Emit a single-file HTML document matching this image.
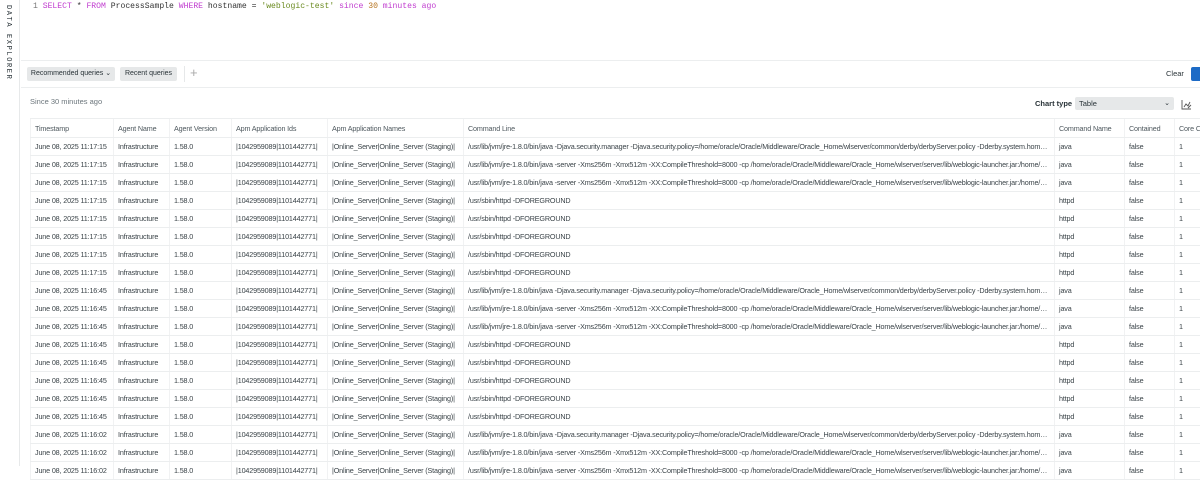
<!DOCTYPE html>
<html><head><meta charset="utf-8"><style>
*{margin:0;padding:0;box-sizing:border-box}
body{width:1200px;height:466px;overflow:hidden;background:#fff;font-family:"Liberation Sans",sans-serif;color:#293338;position:relative}
.side{position:absolute;left:0;top:0;width:20px;height:466px;border-right:1px solid #e7e9ea}
.side span{position:absolute;left:4px;top:5px;writing-mode:vertical-rl;font-family:"Liberation Mono",monospace;font-size:7px;letter-spacing:1.6px;color:#293338}
.q{position:absolute;left:33px;top:1px;font-family:"Liberation Mono",monospace;font-size:8.1px;line-height:11px;white-space:pre;color:#333}
.k{color:#c03ccf}.s{color:#6a8a1f}.n{color:#b5721d}.ln{color:#777}
.hr{position:absolute;left:21px;right:0;height:1px;background:#eceeef}
.btn{position:absolute;top:67px;height:14px;background:#e6e8e9;border-radius:2px;font-size:7px;line-height:14px;text-align:center;color:#293338;white-space:nowrap}
.since{position:absolute;left:30px;top:97px;font-size:7.5px;color:#6c767c}
table{position:absolute;left:30px;top:118px;border-collapse:collapse;table-layout:fixed;width:1190px;font-size:7.2px;letter-spacing:-0.15px}
td,th{height:18px;border-bottom:1px solid #eceeef;border-left:1px solid #f1f2f3;padding:0 3px 0 4px;white-space:nowrap;overflow:hidden;text-overflow:ellipsis;text-align:left;font-weight:normal;color:#3a4348}
th{height:19px;color:#4e585e;border-top:1px solid #eceeef}
</style></head><body>
<div class="side"><span>DATA EXPLORER</span></div>
<div class="q"><span class="ln">1</span> <span class="k">SELECT</span> * <span class="k">FROM</span> ProcessSample <span class="k">WHERE</span> hostname = <span class="s">'weblogic-test'</span> <span class="k">since</span> <span class="n">30</span> <span class="k">minutes ago</span></div>
<div class="hr" style="top:60px"></div>
<div class="btn" style="left:27px;width:88px">Recommended queries ⌄</div>
<div class="btn" style="left:120px;width:57px">Recent queries</div>
<div style="position:absolute;left:184px;top:66px;width:1px;height:16px;background:#e6e8e9"></div>
<div style="position:absolute;left:190px;top:66px;font-size:13px;color:#aaa;line-height:14px">+</div>
<div style="position:absolute;left:1166px;top:69px;font-size:7.5px;color:#293338">Clear</div>
<div style="position:absolute;left:1191px;top:67px;width:12px;height:14px;background:#1d6bc6;border-radius:2px"></div>
<div class="hr" style="top:87px"></div>
<div class="since">Since 30 minutes ago</div>
<div style="position:absolute;left:1035px;top:99px;font-size:7.5px;font-weight:bold;color:#293338">Chart type</div>
<div style="position:absolute;left:1075px;top:97px;width:99px;height:13px;background:#e6e8e9;border-radius:2px;font-size:7.5px;line-height:13px;padding-left:4px">Table<span style="position:absolute;right:4px;font-size:7px">⌄</span></div>
<svg style="position:absolute;left:1181px;top:99px" width="11" height="11" viewBox="0 0 11 11" fill="none" stroke="#555" stroke-width="0.9"><path d="M1 1v9h9M3 8l2-3 2 2 2-4M7 9l3-3"/></svg>
<table>
<colgroup><col style="width:83px"><col style="width:56px"><col style="width:62px"><col style="width:96px"><col style="width:136px"><col style="width:591px"><col style="width:70px"><col style="width:50px"><col style="width:46px"></colgroup>
<tr><th>Timestamp</th><th>Agent Name</th><th>Agent Version</th><th>Apm Application Ids</th><th>Apm Application Names</th><th>Command Line</th><th>Command Name</th><th>Contained</th><th>Core Count</th></tr>
<tbody id="b"></tbody>
</table>
<script>
var S="/usr/lib/jvm/jre-1.8.0/bin/java -Djava.security.manager -Djava.security.policy=/home/oracle/Oracle/Middleware/Oracle_Home/wlserver/common/derby/derbyServer.policy -Dderby.system.home=/home/oracle";
var V="/usr/lib/jvm/jre-1.8.0/bin/java -server -Xms256m -Xmx512m -XX:CompileThreshold=8000 -cp /home/oracle/Oracle/Middleware/Oracle_Home/wlserver/server/lib/weblogic-launcher.jar:/home/oracle/lib";
var H="/usr/sbin/httpd -DFOREGROUND";
var rows=[["11:17:15",S],["11:17:15",V],["11:17:15",V],["11:17:15",H],["11:17:15",H],["11:17:15",H],["11:17:15",H],["11:17:15",H],["11:16:45",S],["11:16:45",V],["11:16:45",V],["11:16:45",H],["11:16:45",H],["11:16:45",H],["11:16:45",H],["11:16:45",H],["11:16:02",S],["11:16:02",V],["11:16:02",V]];
var h="";rows.forEach(function(r){h+="<tr><td>June 08, 2025 "+r[0]+"</td><td>Infrastructure</td><td>1.58.0</td><td>|1042959089|1101442771|</td><td>|Online_Server|Online_Server (Staging)|</td><td>"+r[1]+"</td><td>"+(r[1]==H?"httpd":"java")+"</td><td>false</td><td>1</td></tr>";});
document.getElementById("b").innerHTML=h;
</script>
</body></html>
